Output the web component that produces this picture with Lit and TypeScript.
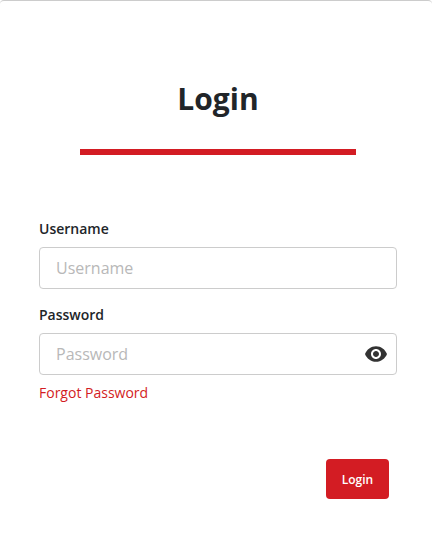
import { LitElement, html, css } from "lit";
import { customElement } from "lit/decorators.js";

@customElement("app-root")
export class AppRoot extends LitElement {
  static styles = css`
    :host { display: block; height: 553px; background: #fff; font-family: "Open Sans", sans-serif; color: #212529; }
    .card { box-sizing: border-box; height: 553px; border-top: 1px solid #ccc; border-radius: 4px 4px 0 0; padding: 0 35px 0 39px; display: flex; flex-direction: column; }
    h1 { margin: 79px 0 0; font-size: 30px; line-height: 38px; font-weight: 700; text-align: center; }
    .bar { height: 6px; width: 276px; background: #d31c23; margin: 31px 0 0 41px; }
    label { display: block; font-size: 14px; line-height: 19px; font-weight: 600; margin-bottom: 9px; }
    .first { margin-top: 64px; }
    .second { margin-top: 16px; }
    .input { box-sizing: border-box; height: 42px; border: 1px solid #ccc; border-radius: 4px; padding: 0 8px 0 16px; display: flex; align-items: center; justify-content: space-between; }
    input { border: 0; outline: 0; padding: 0; min-width: 0; flex: 1; font: 16px "Open Sans", sans-serif; color: #212529; background: transparent; }
    input::placeholder { color: #b8b8b8; opacity: 1; }
    svg { width: 24px; height: 24px; fill: #333; flex: none; display: block; }
    .forgot { font-size: 14px; line-height: 19px; color: #d31c23; text-decoration: none; margin-top: 8px; align-self: flex-start; }
    .actions { display: flex; justify-content: flex-end; margin-top: 57px; padding-right: 8px; }
    button { width: 63px; height: 40px; border: 0; border-radius: 4px; background: #d31c23; color: #fff; font: 600 12px "Open Sans", sans-serif; padding: 0; }
  `;

  render() {
    return html`<div class="card">
      <h1>Login</h1>
      <div class="bar"></div>
      <label class="first">Username</label>
      <div class="input"><input placeholder="Username" /></div>
      <label class="second">Password</label>
      <div class="input">
        <input placeholder="Password" />
        <svg viewBox="0 0 24 24"><path d="M12 4.2C7 4.2 2.73 7.5 1 12c1.73 4.5 6 7.8 11 7.8s9.27-3.3 11-7.8c-1.73-4.5-6-7.8-11-7.8zM12 17c-2.76 0-5-2.24-5-5s2.24-5 5-5 5 2.24 5 5-2.24 5-5 5zm0-8c-1.66 0-3 1.34-3 3s1.34 3 3 3 3-1.34 3-3-1.34-3-3-3z"/></svg>
      </div>
      <a class="forgot" href="#">Forgot Password</a>
      <div class="actions"><button>Login</button></div>
    </div>`;
  }
}
